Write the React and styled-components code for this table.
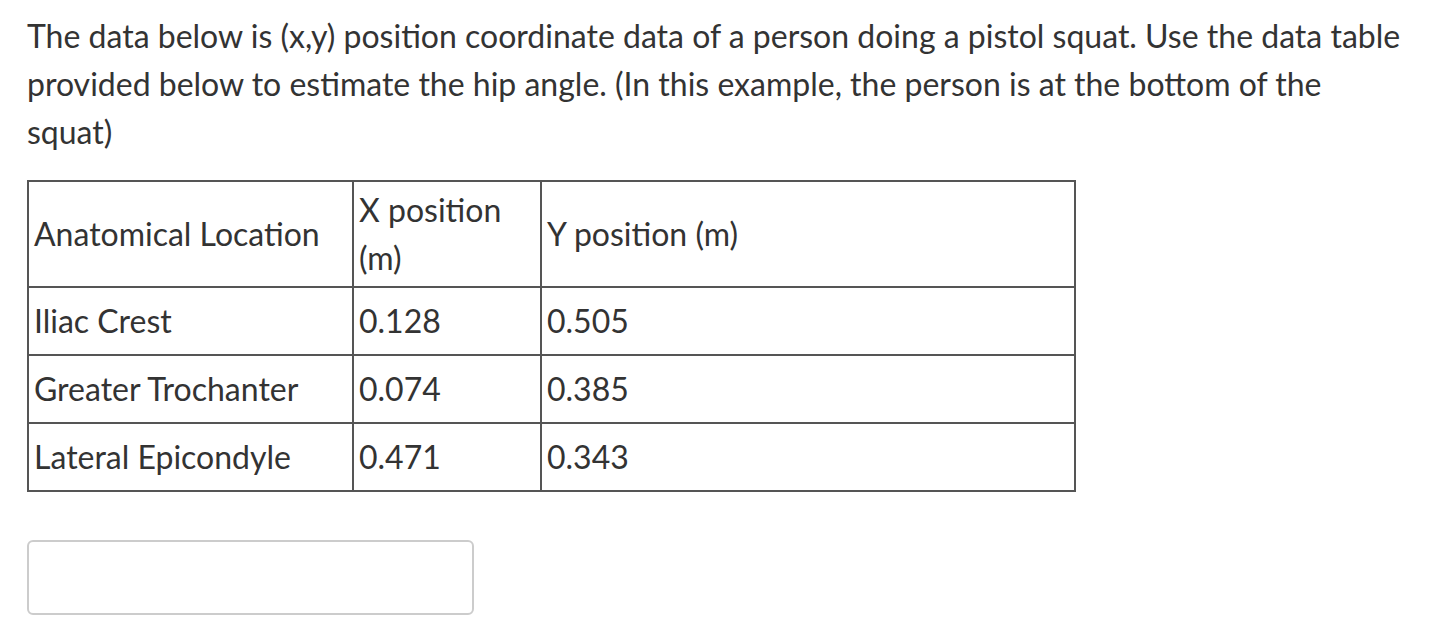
import React from 'react';
import styled, { createGlobalStyle } from 'styled-components';

const Global = createGlobalStyle`
  body {
    margin: 0;
    background: #fff;
    font-family: Lato, "Open Sans", sans-serif;
    color: #333;
  }
`;

const Page = styled.div`
  padding: 12px 0 0 27px;
  line-height: 48px;
  font-size: 32px;
`;

const Question = styled.p`
  margin: 0 0 24px;
  white-space: nowrap;
`;

const Table = styled.table`
  border-collapse: collapse;
  width: 1048px;
  table-layout: fixed;
  font-size: 32px;
`;

const Row = styled.tr`
  height: ${p => p.$h}px;
`;

const Cell = styled.td`
  border: 2px solid #555;
  padding: 0 5px;
  vertical-align: middle;
  font-weight: 400;
  text-align: left;
  white-space: nowrap;
`;

const Answer = styled.input`
  display: block;
  margin-top: 48px;
  width: 447px;
  height: 75px;
  box-sizing: border-box;
  border: 2px solid #ccc;
  border-radius: 6px;
  background: #fff;
  font: inherit;
  outline: none;
`;

const rows = [
  ['Iliac Crest', '0.128', '0.505'],
  ['Greater Trochanter', '0.074', '0.385'],
  ['Lateral Epicondyle', '0.471', '0.343'],
];

export default function App() {
  return (
    <>
      <Global />
      <Page>
        <Question>
          The data below is (x,y) position coordinate data of a person doing a pistol squat. Use the data table
          <br />
          provided below to estimate the hip angle. (In this example, the person is at the bottom of the
          <br />
          squat)
        </Question>
        <Table>
          <colgroup>
            <col style={{ width: 325 }} />
            <col style={{ width: 188 }} />
            <col style={{ width: 534 }} />
          </colgroup>
          <tbody>
            <Row $h={106}>
              <Cell>Anatomical Location</Cell>
              <Cell>X position<br />(m)</Cell>
              <Cell>Y position (m)</Cell>
            </Row>
            {rows.map(r => (
              <Row $h={68} key={r[0]}>
                <Cell>{r[0]}</Cell>
                <Cell>{r[1]}</Cell>
                <Cell>{r[2]}</Cell>
              </Row>
            ))}
          </tbody>
        </Table>
        <Answer type="text" />
      </Page>
    </>
  );
}
